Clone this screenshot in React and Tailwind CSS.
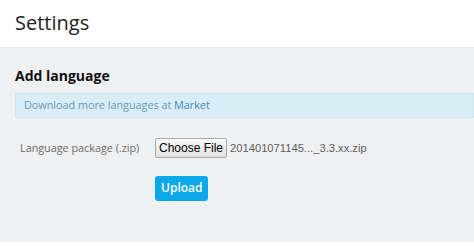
export default function App() {
  return (
    <div className="w-[474px] h-[247px] bg-white overflow-hidden" style={{ fontFamily: '"Open Sans", sans-serif' }}>
      <div className="h-[47px] pl-[15px] pt-[9px]">
        <h1 className="text-[20px] leading-[28px] text-[#222]">Settings</h1>
      </div>
      <div className="h-[195px] bg-[#eff0f2] border-t border-[#e6e7e9] pl-[15px] pt-[18px]">
        <h2 className="text-[14px] font-bold leading-[20px] text-[#111]">Add language</h2>
        <div className="mt-[7px] h-[25px] bg-[#d9edf7] border border-[#cfe5ef] pl-[8px] flex items-center text-[10.8px] text-[#6c9ab4]">
          Download more languages at&nbsp;<span className="text-[#3e8cc4]">Market</span>
        </div>
        <div className="mt-[20px] flex items-center">
          <div className="w-[140px] pl-[5px] text-[10.8px] text-[#6b6b6b]">Language package (.zip)</div>
          <div className="flex items-center">
            <span className="h-[20px] px-[3px] border border-[#a9a9a9] rounded-[2px] bg-gradient-to-b from-[#f8f8f8] to-[#e2e2e2] text-[12px] leading-[18px] text-black" style={{ fontFamily: '"Liberation Sans", Arial, sans-serif' }}>Choose File</span>
            <span className="ml-[3px] text-[11.2px] text-[#5e5e5e]" style={{ fontFamily: '"Liberation Sans", Arial, sans-serif' }}>201401071145..._3.3.xx.zip</span>
          </div>
        </div>
        <div className="mt-[16px] pl-[140px]">
          <button className="h-[25px] px-[6px] rounded-[3px] bg-[#0ba9ea] text-white text-[12px] font-semibold">Upload</button>
        </div>
      </div>
    </div>
  );
}
